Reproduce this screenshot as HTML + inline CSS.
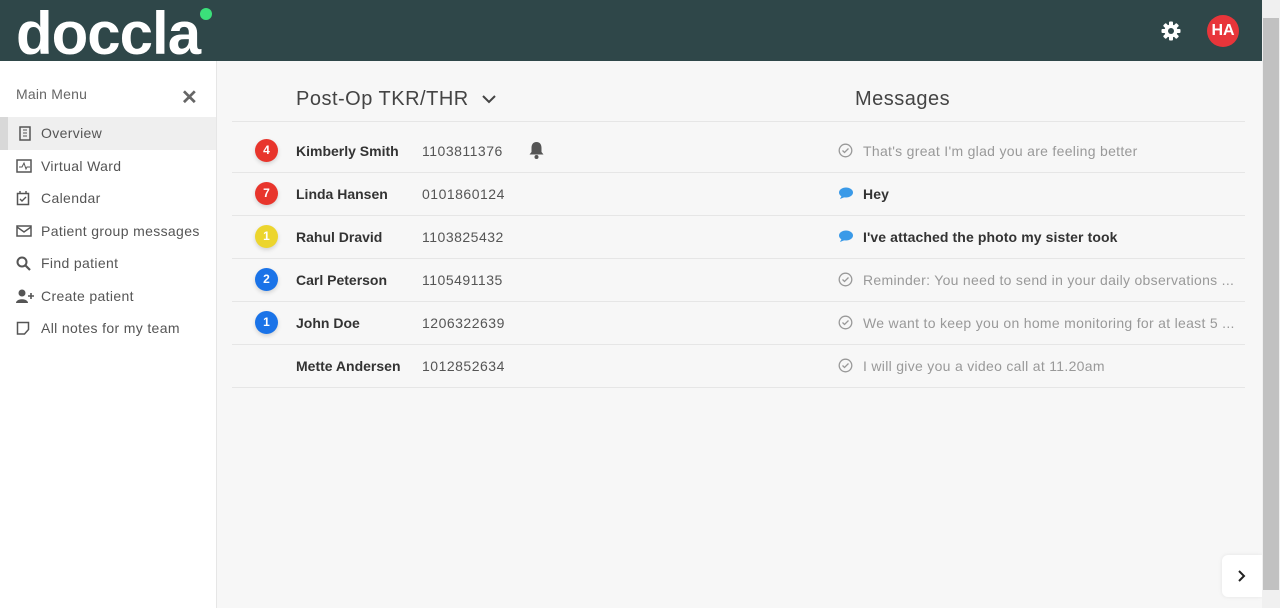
<!DOCTYPE html>
<html><head><style>
*{box-sizing:border-box;margin:0;padding:0}
body{width:1280px;height:608px;overflow:hidden;font-family:"Liberation Sans",sans-serif;background:#f7f7f7;position:relative;color:#333}
.hdr{position:absolute;left:0;top:0;width:1262px;height:61px;background:#2f4749}
.logo{position:absolute;left:16px;top:4px;font-size:60px;line-height:60px;font-weight:bold;color:#fff;letter-spacing:-1px}
.dot{position:absolute;left:200px;top:8px;width:12px;height:12px;border-radius:50%;background:#3be07a}
.av{position:absolute;left:1207px;top:15px;width:32px;height:32px;border-radius:50%;background:#e8353a;color:#fff;font-weight:bold;font-size:16px;text-align:center;line-height:32px}
.side{position:absolute;left:0;top:61px;width:217px;height:547px;background:#fff;border-right:1px solid #e6e6e6}
.mm{position:absolute;left:16px;top:25px;font-size:14px;color:#666;letter-spacing:.2px}
.x{position:absolute;left:181px;top:24px;font-size:20px;color:#666;font-weight:bold}
.it{position:absolute;left:0;width:216px;height:33px;font-size:14px;color:#555;line-height:33px;padding-left:41px;letter-spacing:.35px}
.it svg{position:absolute;left:16px;top:9px}
.act{background:#efefef;border-left:8px solid #d8d8d8;padding-left:33px}
.act svg{left:10px}
.scroll{position:absolute;left:1262px;top:0;width:18px;height:608px;background:#f0f0f0}
.thumb{position:absolute;left:1263px;top:18px;width:16px;height:572px;background:#c1c1c1}
.title{position:absolute;left:296px;top:88px;font-size:20px;color:#444;letter-spacing:.5px}
.msgs{position:absolute;left:855px;top:88px;font-size:20px;color:#444;letter-spacing:.5px}
.line{position:absolute;left:232px;width:1013px;height:1px;background:#e6e6e6}
.row{position:absolute;left:232px;width:1013px;height:43px;font-size:14px}
.b{position:absolute;left:23px;top:10px;width:23px;height:23px;border-radius:50%;color:#fff;font-size:12px;font-weight:bold;text-align:center;line-height:23px;box-shadow:0 2px 4px rgba(0,0,0,.15)}
.n{position:absolute;left:64px;top:14px;font-weight:bold;color:#333}
.id{position:absolute;left:190px;top:14px;color:#555;letter-spacing:.5px}
.m{position:absolute;left:631px;top:14px;color:#999;white-space:nowrap;letter-spacing:.3px}
.m.u{color:#333;font-weight:bold;letter-spacing:.1px}
.ic{position:absolute;left:606px;top:14px}
.nav{position:absolute;left:1222px;top:555px;width:40px;height:42px;background:#fff;border-radius:6px 0 0 6px;box-shadow:0 0 4px rgba(0,0,0,.08)}
</style></head><body>
<div class="hdr"><div class="logo">doccla</div><div class="dot"></div>
<svg style="position:absolute;left:1161px;top:21px" width="20" height="20" viewBox="0 0 20 20"><g fill="#fff"><circle cx="10" cy="10" r="6.5"/><rect x="8" y="0.5" width="4" height="19" rx="1"/><rect x="0.5" y="8" width="19" height="4" rx="1"/><rect x="8" y="0.5" width="4" height="19" rx="1" transform="rotate(45 10 10)"/><rect x="8" y="0.5" width="4" height="19" rx="1" transform="rotate(-45 10 10)"/></g><circle cx="10" cy="10" r="3" fill="#2f4749"/></svg>
<div class="av">HA</div></div>
<div class="side"><div class="mm">Main Menu</div><div class="x">✕</div>
<div class="it act" style="top:56px"><svg width="14" height="15"><rect x="2" y="1" width="10" height="13" fill="none" stroke="#555" stroke-width="1.5"/><path d="M5 4h4M5 7h4M5 10h4" stroke="#555"/></svg>Overview</div>
<div class="it" style="top:89px"><svg width="16" height="15"><rect x="1" y="1" width="14" height="12" fill="none" stroke="#555" stroke-width="1.5"/><path d="M3 8h3l2-4 2 6 1-2h3" fill="none" stroke="#555"/></svg>Virtual Ward</div>
<div class="it" style="top:121px"><svg width="14" height="15"><rect x="1.5" y="2.5" width="11" height="11" fill="none" stroke="#555" stroke-width="1.5"/><path d="M4 0v3M10 0v3M4 8l2 2 4-4" fill="none" stroke="#555" stroke-width="1.4"/></svg>Calendar</div>
<div class="it" style="top:154px"><svg width="16" height="15"><rect x="1" y="2" width="14" height="10" fill="none" stroke="#555" stroke-width="1.5"/><path d="M1 3l7 5 7-5" fill="none" stroke="#555" stroke-width="1.4"/></svg>Patient group messages</div>
<div class="it" style="top:186px"><svg width="16" height="15"><circle cx="6" cy="6" r="4.5" fill="none" stroke="#555" stroke-width="2"/><path d="M9.5 9.5l4.5 4.5" stroke="#555" stroke-width="2.2"/></svg>Find patient</div>
<div class="it" style="top:219px"><svg width="20" height="15"><circle cx="6" cy="4" r="3.5" fill="#555"/><path d="M0 14c0-5 12-5 12 0z" fill="#555"/><path d="M15 4v6M12 7h6" stroke="#555" stroke-width="1.6"/></svg>Create patient</div>
<div class="it" style="top:251px"><svg width="14" height="15"><path d="M1.5 1.5h11v7l-4 4.5h-7z" fill="none" stroke="#555" stroke-width="1.5"/></svg>All notes for my team</div>
</div>
<div class="title">Post-Op TKR/THR <svg width="16" height="12" style="margin-left:6px"><path d="M2 3l6 6 6-6" fill="none" stroke="#444" stroke-width="2"/></svg></div>
<div class="msgs">Messages</div>
<div class="line" style="top:121px"></div>
<div class="row" style="top:129px"><div class="b" style="background:#e8352c">4</div><div class="n">Kimberly Smith</div><div class="id">1103811376</div>
<svg style="position:absolute;left:296px;top:12px" width="17" height="18" viewBox="0 0 17 18"><path d="M8.5 1c3.5 0 5 2.5 5 6v4l2 2.5H1.5l2-2.5V7c0-3.5 1.5-6 5-6z" fill="#555"/><circle cx="8.5" cy="16" r="2" fill="#555"/></svg>
<svg class="ic" width="15" height="15"><circle cx="7.5" cy="7.5" r="6.3" fill="none" stroke="#999" stroke-width="1.3"/><path d="M4.5 7.5l2 2 4-4" fill="none" stroke="#999" stroke-width="1.3"/></svg><div class="m">That's great I'm glad you are feeling better</div></div>
<div class="line" style="top:172px"></div>
<div class="row" style="top:172px"><div class="b" style="background:#e8352c">7</div><div class="n">Linda Hansen</div><div class="id">0101860124</div>
<svg class="ic" width="16" height="15"><ellipse cx="8" cy="6.5" rx="7" ry="5" fill="#3a9ae8"/><path d="M2 13l2-4 3 2z" fill="#3a9ae8"/></svg><div class="m u">Hey</div></div>
<div class="line" style="top:215px"></div>
<div class="row" style="top:215px"><div class="b" style="background:#ecd52e">1</div><div class="n">Rahul Dravid</div><div class="id">1103825432</div>
<svg class="ic" width="16" height="15"><ellipse cx="8" cy="6.5" rx="7" ry="5" fill="#3a9ae8"/><path d="M2 13l2-4 3 2z" fill="#3a9ae8"/></svg><div class="m u">I've attached the photo my sister took</div></div>
<div class="line" style="top:258px"></div>
<div class="row" style="top:258px"><div class="b" style="background:#1a73e8">2</div><div class="n">Carl Peterson</div><div class="id">1105491135</div>
<svg class="ic" width="15" height="15"><circle cx="7.5" cy="7.5" r="6.3" fill="none" stroke="#999" stroke-width="1.3"/><path d="M4.5 7.5l2 2 4-4" fill="none" stroke="#999" stroke-width="1.3"/></svg><div class="m">Reminder: You need to send in your daily observations ...</div></div>
<div class="line" style="top:301px"></div>
<div class="row" style="top:301px"><div class="b" style="background:#1a73e8">1</div><div class="n">John Doe</div><div class="id">1206322639</div>
<svg class="ic" width="15" height="15"><circle cx="7.5" cy="7.5" r="6.3" fill="none" stroke="#999" stroke-width="1.3"/><path d="M4.5 7.5l2 2 4-4" fill="none" stroke="#999" stroke-width="1.3"/></svg><div class="m">We want to keep you on home monitoring for at least 5 ...</div></div>
<div class="line" style="top:344px"></div>
<div class="row" style="top:344px"><div class="n">Mette Andersen</div><div class="id">1012852634</div>
<svg class="ic" width="15" height="15"><circle cx="7.5" cy="7.5" r="6.3" fill="none" stroke="#999" stroke-width="1.3"/><path d="M4.5 7.5l2 2 4-4" fill="none" stroke="#999" stroke-width="1.3"/></svg><div class="m">I will give you a video call at 11.20am</div></div>
<div class="line" style="top:387px"></div>
<div class="nav"><svg style="position:absolute;left:15px;top:15px" width="10" height="12"><path d="M2 1l5 5-5 5" fill="none" stroke="#222" stroke-width="2"/></svg></div>
<div class="scroll"></div><div class="thumb"></div>
</body></html>
